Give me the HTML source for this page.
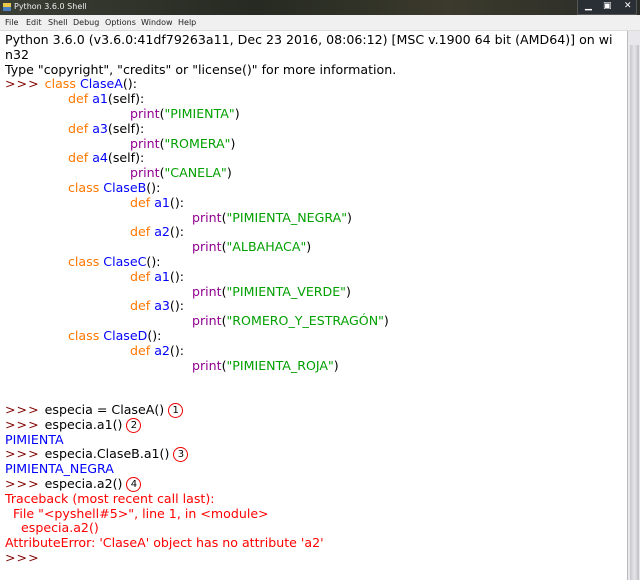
<!DOCTYPE html>
<html><head><style>
body{margin:0;width:640px;height:580px;overflow:hidden;background:#fff;font-family:"DejaVu Sans","Liberation Sans",sans-serif;position:relative}
.title{position:absolute;left:0;top:0;width:640px;height:15px;background:linear-gradient(90deg,#3a3f35,#262a22 40%,#3b3a2c 70%,#2a2c28);}
.title span{position:absolute;left:14px;top:2px;font-size:8px;color:#eee}
.ic{position:absolute;left:3px;top:3px;width:8px;height:8px;background:#4a7fbf;border-top:4px solid #e8c84a;box-sizing:border-box}
.btns{position:absolute;right:3px;top:0;width:60px;height:15px;background:#2a2f35;border:1px solid #555;border-top:0;box-sizing:border-box}
.btns i{position:absolute;color:#fff;font-style:normal;font-size:9px;top:1px}
.menu{position:absolute;left:0;top:15px;width:640px;height:15px;background:#f0f0f0;border-bottom:1px solid #ddd;font-size:8px;color:#222}
.menu span{position:absolute;top:3px}
.code{position:absolute;left:5px;top:33px;font-size:12.6px;line-height:14.8px;color:#000}
.l{height:14.8px;position:relative;white-space:pre}
.p{color:#800000;letter-spacing:1px}.k{color:#ff7700}.d{color:#0000ff}.b{color:#900090}.s{color:#00a000}.o{color:#0000ff}.e{color:#ff0000}
.c{position:absolute;top:0px;width:15px;height:15px;border:1.4px solid #e00;border-radius:50%;font-size:10px;line-height:13px;text-align:center;box-sizing:border-box;margin-left:4px;color:#000}
.sb{position:absolute;left:627px;top:31px;width:13px;height:549px;background:#e8e8ec;border-left:1px solid #bbb}
.th{position:absolute;left:630px;top:45px;width:9px;height:535px;background:linear-gradient(90deg,#c8c8cc,#e6e6ea,#c0c0c4)}
</style></head><body>
<div class="title"><div class="ic"></div><span>Python 3.6.0 Shell</span><div class="btns"><i style="left:7px">▁</i><i style="left:25px">▣</i><i style="left:46px">✕</i></div></div>
<div class="menu"><span style="left:5px">File</span><span style="left:26px">Edit</span><span style="left:48px">Shell</span><span style="left:73px">Debug</span><span style="left:105px">Options</span><span style="left:141px">Window</span><span style="left:178px">Help</span></div>
<div class="sb"></div><div class="th"></div>
<div class="code"><div class="l">Python 3.6.0 (v3.6.0:41df79263a11, Dec 23 2016, 08:06:12) [MSC v.1900 64 bit (AMD64)] on wi</div><div class="l">n32</div><div class="l">Type "copyright", "credits" or "license()" for more information.</div><div class="l"><span class="p">&gt;&gt;&gt; </span><span class="k">class </span><span class="d">ClaseA</span>():</div><div class="l" style="left:63px"><span class="k">def </span><span class="d">a1</span>(self):</div><div class="l" style="left:125px"><span class="b">print</span>(<span class="s">"PIMIENTA"</span>)</div><div class="l" style="left:63px"><span class="k">def </span><span class="d">a3</span>(self):</div><div class="l" style="left:125px"><span class="b">print</span>(<span class="s">"ROMERA"</span>)</div><div class="l" style="left:63px"><span class="k">def </span><span class="d">a4</span>(self):</div><div class="l" style="left:125px"><span class="b">print</span>(<span class="s">"CANELA"</span>)</div><div class="l" style="left:63px"><span class="k">class </span><span class="d">ClaseB</span>():</div><div class="l" style="left:125px"><span class="k">def </span><span class="d">a1</span>():</div><div class="l" style="left:187px"><span class="b">print</span>(<span class="s">"PIMIENTA_NEGRA"</span>)</div><div class="l" style="left:125px"><span class="k">def </span><span class="d">a2</span>():</div><div class="l" style="left:187px"><span class="b">print</span>(<span class="s">"ALBAHACA"</span>)</div><div class="l" style="left:63px"><span class="k">class </span><span class="d">ClaseC</span>():</div><div class="l" style="left:125px"><span class="k">def </span><span class="d">a1</span>():</div><div class="l" style="left:187px"><span class="b">print</span>(<span class="s">"PIMIENTA_VERDE"</span>)</div><div class="l" style="left:125px"><span class="k">def </span><span class="d">a3</span>():</div><div class="l" style="left:187px"><span class="b">print</span>(<span class="s">"ROMERO_Y_ESTRAGÓN"</span>)</div><div class="l" style="left:63px"><span class="k">class </span><span class="d">ClaseD</span>():</div><div class="l" style="left:125px"><span class="k">def </span><span class="d">a2</span>():</div><div class="l" style="left:187px"><span class="b">print</span>(<span class="s">"PIMIENTA_ROJA"</span>)</div><div class="l"></div><div class="l"></div><div class="l"><span class="p">&gt;&gt;&gt; </span>especia = ClaseA()<span class="c">1</span></div><div class="l"><span class="p">&gt;&gt;&gt; </span>especia.a1()<span class="c">2</span></div><div class="l o">PIMIENTA</div><div class="l"><span class="p">&gt;&gt;&gt; </span>especia.ClaseB.a1()<span class="c">3</span></div><div class="l o">PIMIENTA_NEGRA</div><div class="l"><span class="p">&gt;&gt;&gt; </span>especia.a2()<span class="c">4</span></div><div class="l e">Traceback (most recent call last):</div><div class="l e">  File "&lt;pyshell#5&gt;", line 1, in &lt;module&gt;</div><div class="l e">    especia.a2()</div><div class="l e">AttributeError: 'ClaseA' object has no attribute 'a2'</div><div class="l"><span class="p">&gt;&gt;&gt; </span></div></div>
</body></html>
